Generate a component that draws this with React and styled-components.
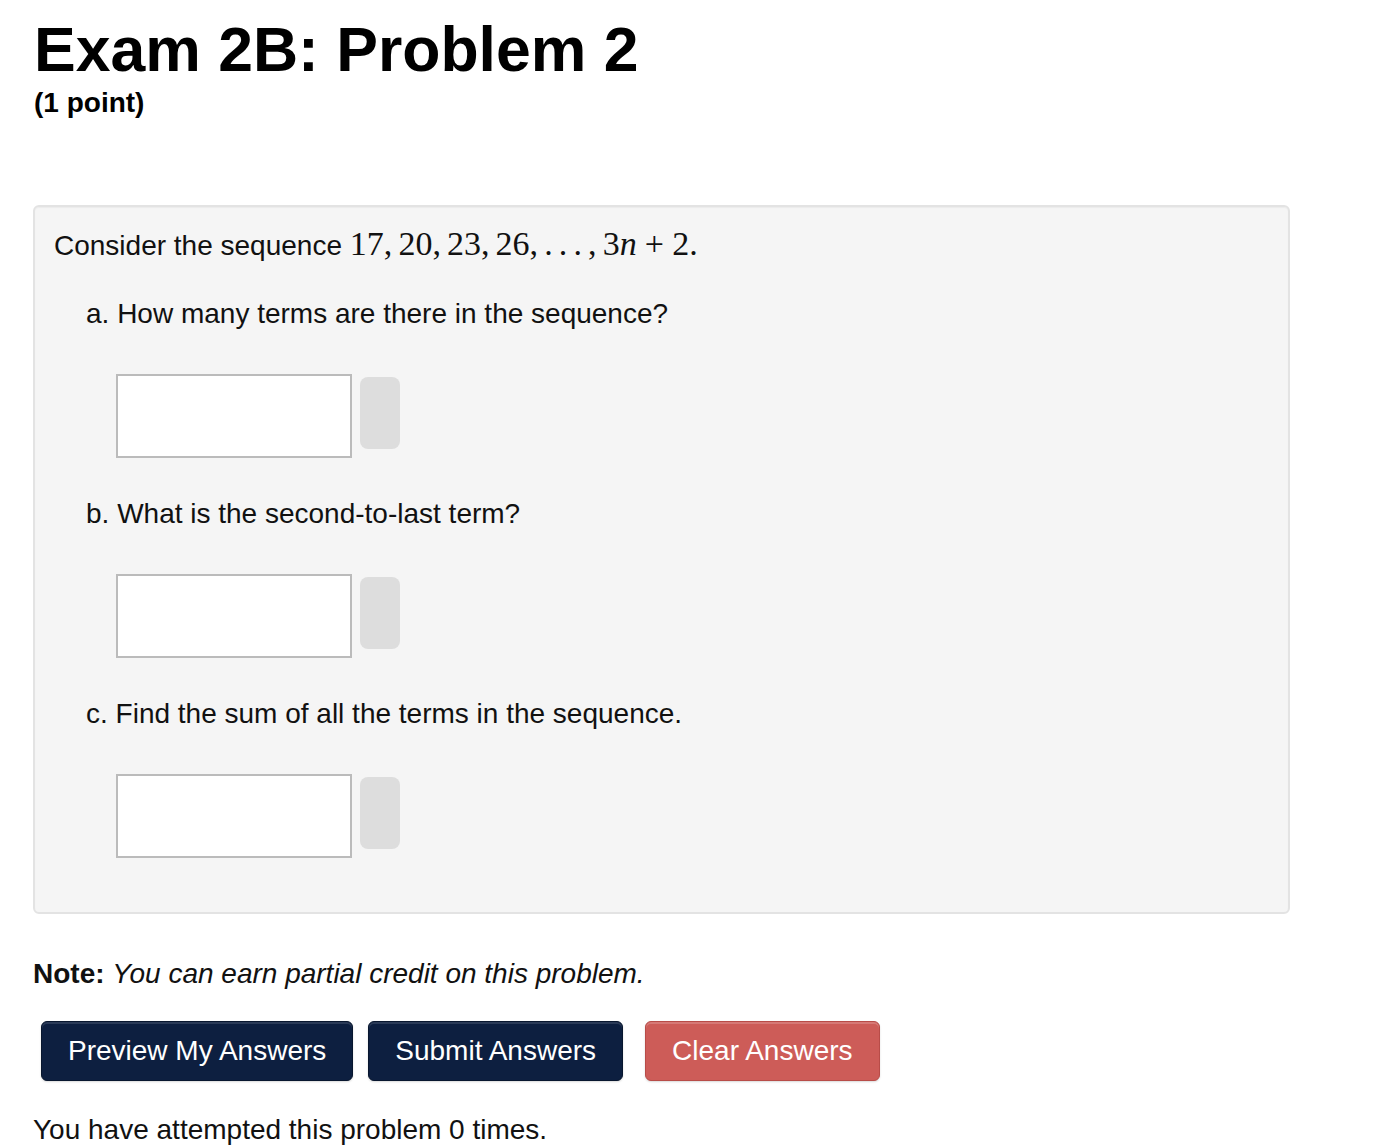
import React from "react";
import styled, { createGlobalStyle } from "styled-components";

const GlobalStyle = createGlobalStyle`
  html, body {
    margin: 0;
    padding: 0;
    background: #ffffff;
  }
  body {
    font-family: "Liberation Sans", Arial, Helvetica, sans-serif;
    color: #111111;
  }
`;

const Page = styled.div`
  padding: 13px 0 0 33px;
  width: 1257px;
`;

const Title = styled.h1`
  margin: 0 0 0 1px;
  font-size: 62.5px;
  line-height: 72px;
  font-weight: bold;
  color: #000;
`;

const Points = styled.div`
  margin-left: 1px;
  font-size: 28px;
  line-height: 36px;
  font-weight: bold;
  color: #000;
`;

const ProblemBox = styled.div`
  margin-top: 84px;
  box-sizing: border-box;
  width: 1257px;
  background: #f5f5f5;
  border: 2px solid #e3e3e3;
  border-radius: 6px;
  box-shadow: inset 0 1px 1px rgba(0, 0, 0, 0.04);
  padding: 17px 20px 54px 19px;
`;

const Text = styled.p`
  margin: 0;
  font-size: 28px;
  line-height: 40px;
`;

const Math = styled.span`
  font-family: "Liberation Serif", "Times New Roman", serif;
  font-size: 34px;
`;

const Thin = styled.span`
  margin-right: 0.18em;
`;

const Op = styled.span`
  margin: 0 0.24em;
`;

const Dots = styled.span`
  letter-spacing: 0.18em;
`;

const Var = styled.i`
  font-style: italic;
`;

const Parts = styled.ol`
  list-style: none;
  margin: 28px 0 0 32px;
  padding: 0;
  display: flex;
  flex-direction: column;
  gap: 36px;
`;

const Part = styled.li`
  display: flex;
  flex-direction: column;
  gap: 40px;
`;

const AnswerRow = styled.div`
  display: flex;
  align-items: flex-start;
  gap: 8px;
  margin-left: 30px;
`;

const AnswerInput = styled.input`
  box-sizing: border-box;
  width: 236px;
  height: 84px;
  border: 2px solid #bbbbbb;
  background: #ffffff;
  border-radius: 0;
  padding: 0 10px;
  font-size: 28px;
  font-family: inherit;
  outline: none;
`;

const Feedback = styled.span`
  display: block;
  width: 40px;
  height: 72px;
  margin-top: 3px;
  background: #dddddd;
  border-radius: 8px;
`;

const Note = styled.p`
  margin: 40px 0 0;
  font-size: 28px;
  line-height: 40px;

  strong {
    font-weight: bold;
  }
  em {
    font-style: italic;
  }
`;

const Buttons = styled.div`
  display: flex;
  margin-top: 27px;
  padding-left: 8px;
`;

const Button = styled.button`
  box-sizing: border-box;
  height: 60px;
  margin-left: ${(p) => p.$gap || 0}px;
  padding: 0 26px;
  font-family: "Liberation Sans", Arial, Helvetica, sans-serif;
  font-size: 28px;
  color: #ffffff;
  border-radius: 6px;
  cursor: pointer;
  background: ${(p) => (p.$danger ? "#cd5c58" : "#0d1f40")};
  border: 1px solid ${(p) => (p.$danger ? "#b84c48" : "#08162e")};
  box-shadow: inset 0 2px 0 ${(p) => (p.$danger ? "rgba(255,255,255,0.18)" : "rgba(255,255,255,0.12)")},
    0 1px 2px rgba(0, 0, 0, 0.15);
`;

const Attempts = styled.p`
  margin: 29px 0 0;
  font-size: 28px;
  line-height: 40px;
`;

const questions = [
  "a. How many terms are there in the sequence?",
  "b. What is the second-to-last term?",
  "c. Find the sum of all the terms in the sequence.",
];

const App = () => {
  return (
    <>
      <GlobalStyle />
      <Page>
        <Title>Exam 2B: Problem 2</Title>
        <Points>(1 point)</Points>

        <ProblemBox>
          <Text>
            Consider the sequence{" "}
            <Math>
              17,<Thin />20,<Thin />23,<Thin />26,<Thin />
              <Dots>...</Dots>,<Thin />3<Var>n</Var>
              <Op>+</Op>2.
            </Math>
          </Text>
          <Parts>
            {questions.map((q) => (
              <Part key={q}>
                <Text>{q}</Text>
                <AnswerRow>
                  <AnswerInput type="text" aria-label={q} />
                  <Feedback />
                </AnswerRow>
              </Part>
            ))}
          </Parts>
        </ProblemBox>

        <Note>
          <strong>Note:</strong> <em>You can earn partial credit on this problem.</em>
        </Note>

        <Buttons>
          <Button type="button">Preview My Answers</Button>
          <Button type="button" $gap={15}>
            Submit Answers
          </Button>
          <Button type="button" $gap={22} $danger>
            Clear Answers
          </Button>
        </Buttons>

        <Attempts>You have attempted this problem 0 times.</Attempts>
      </Page>
    </>
  );
};

export default App;
